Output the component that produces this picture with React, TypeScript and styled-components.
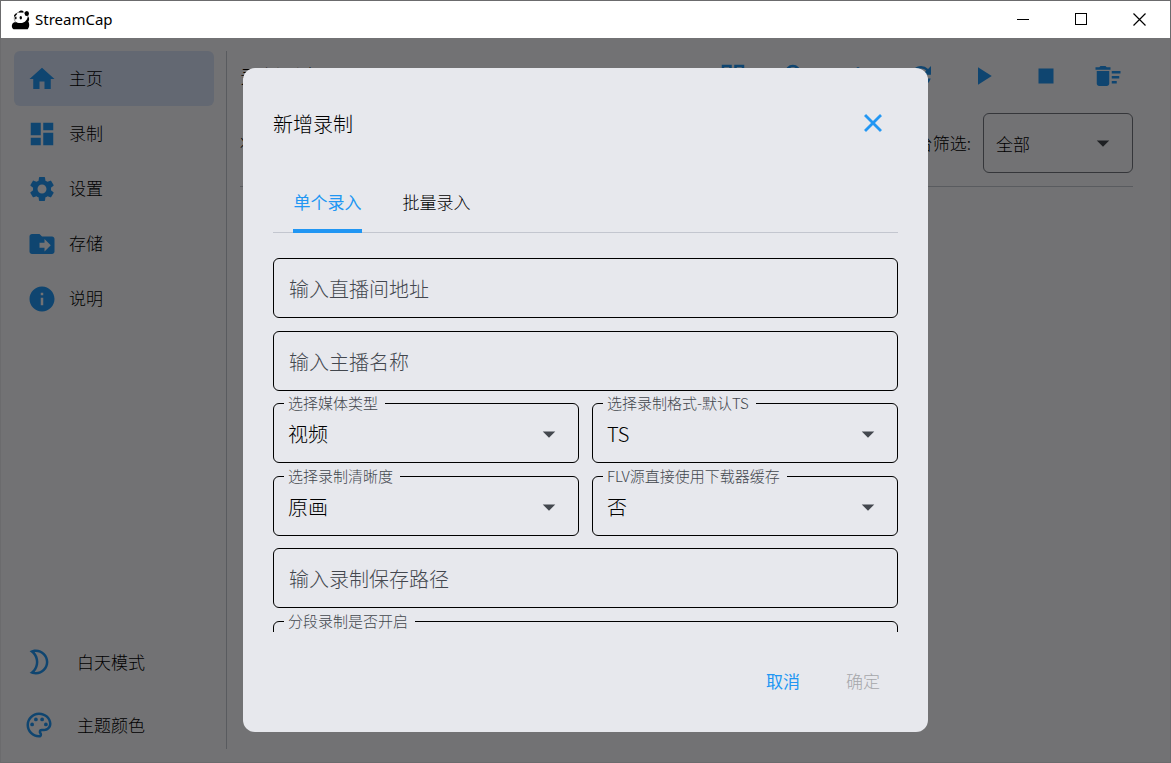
import React from "react";
import styled, { createGlobalStyle } from "styled-components";
import {
  MdAdd,
  MdArrowDropDown,
  MdClose,
  MdDashboard,
  MdDeleteSweep,
  MdDriveFileMove,
  MdHome,
  MdInfo,
  MdOutlineGridView,
  MdOutlineModeNight,
  MdOutlinePalette,
  MdPlayArrow,
  MdRefresh,
  MdSearch,
  MdSettings,
  MdStop,
} from "react-icons/md";

const color = {
  primary: "#2196f3",
  surface: "#f8f8fc",
  dialog: "#e7e8ed",
  selected: "#d7e3f8",
  text: "#000000",
  muted: "#43474e",
  disabled: "#a5a6aa",
  line: "#c3c6cf",
};

const GlobalStyle = createGlobalStyle`
  *, *::before, *::after { box-sizing: border-box; }
  html, body, #root { height: 100%; margin: 0; }
  body, button, input, select {
    font-family: "Noto Sans CJK SC", "Noto Sans", sans-serif;
    font-size: 17px;
    font-weight: 300;
    color: ${color.text};
  }
  button {
    padding: 0;
    border: 0;
    background: none;
    cursor: pointer;
  }
  svg { display: block; flex: none; }
`;

const Window = styled.div`
  display: flex;
  flex-direction: column;
  height: 100%;
  min-height: 480px;
  border: 1px solid #6b6b6d;
  overflow: hidden;
`;

const TitleBar = styled.header`
  display: flex;
  align-items: center;
  flex: none;
  height: 37px;
  padding: 0 2px 0 10px;
  background: #ffffff;
`;

const AppName = styled.span`
  flex: 1;
  margin-left: 5px;
  padding-bottom: 2px;
  font-family: "Noto Sans", sans-serif;
  font-size: 15px;
  font-weight: 400;
`;

const CaptionButton = styled.button`
  display: flex;
  align-items: center;
  justify-content: center;
  width: 58px;
  height: 100%;
`;

const Client = styled.div`
  position: relative;
  display: flex;
  flex: 1;
  min-height: 0;
  background: ${color.surface};
`;

const Sidebar = styled.aside`
  display: flex;
  flex-direction: column;
  justify-content: space-between;
  flex: none;
  width: 226px;
  margin: 13px 0;
  padding: 0 12px 0 13px;
  border-right: 1px solid ${color.line};
`;

const NavList = styled.nav`
  display: flex;
  flex-direction: column;
`;

const NavItem = styled.a<{ $active?: boolean }>`
  display: flex;
  align-items: center;
  gap: 12px;
  height: 55px;
  padding-left: 13px;
  border-radius: 6px;
  background: ${(p) => (p.$active ? color.selected : "transparent")};
  color: ${color.text};
  text-decoration: none;

  svg { color: ${color.primary}; }
`;

const ItemLabel = styled.span`
  padding-bottom: 2px;
`;

const Preferences = styled.div`
  display: flex;
  flex-direction: column;
  gap: 15px;
`;

const PreferenceButton = styled.button`
  display: flex;
  align-items: center;
  gap: 23px;
  height: 48px;
  padding-left: 10px;
  text-align: left;

  svg { color: ${color.primary}; }
`;

const Main = styled.main`
  flex: 1;
  min-width: 0;
  padding: 13px 37px 0 13px;
`;

const Toolbar = styled.div`
  display: flex;
  align-items: center;
  justify-content: space-between;
  height: 50px;
`;

const PageTitle = styled.h1`
  margin: 0;
  font-size: 20px;
  font-weight: 300;
`;

const ToolGroup = styled.div`
  display: flex;
  justify-content: space-between;
  width: 425px;
`;

const IconButton = styled.button`
  display: flex;
  align-items: center;
  justify-content: center;
  width: 50px;
  height: 50px;
  color: ${color.primary};
`;

const FilterRow = styled.div`
  display: flex;
  align-items: center;
  justify-content: space-between;
  padding: 12px 0 13px;
  border-bottom: 1px solid ${color.line};
`;

const FilterLabel = styled.label`
  padding-bottom: 2px;
`;

const PlatformFilter = styled.div`
  display: flex;
  align-items: center;
  gap: 12px;
`;

const SelectBox = styled.div`
  position: relative;
  width: 150px;
  height: 60px;
  border: 1px solid #73777f;
  border-radius: 6px;
`;

const Select = styled.select<{ $size: number; $inset: number }>`
  width: 100%;
  height: 100%;
  padding: 0 48px 0 ${(p) => p.$inset}px;
  border: 0;
  outline: 0;
  appearance: none;
  background: transparent;
  font-size: ${(p) => p.$size}px;
`;

const Caret = styled(MdArrowDropDown)`
  position: absolute;
  top: 50%;
  right: 14px;
  margin-top: -15px;
  color: ${color.muted};
  pointer-events: none;
`;

const Scrim = styled.div`
  position: absolute;
  inset: 0;
  display: flex;
  align-items: stretch;
  justify-content: center;
  padding: 30px;
  background: rgba(0, 0, 0, 0.54);
`;

const Dialog = styled.section`
  display: flex;
  flex-direction: column;
  width: 100%;
  max-width: 685px;
  padding: 30px 30px 25px;
  border-radius: 12px;
  background: ${color.dialog};
`;

const DialogHeader = styled.header`
  display: flex;
  align-items: center;
  justify-content: space-between;
  flex: none;
  height: 50px;
`;

const CloseButton = styled(IconButton)`
  path:last-child {
    stroke: ${color.primary};
    stroke-width: 0.3px;
  }
`;

const DialogTitle = styled.h2`
  margin: 0;
  font-size: 20px;
  font-weight: 300;
`;

const Tabs = styled.div`
  display: flex;
  flex: none;
  height: 60px;
  margin: 25px 0;
  border-bottom: 1px solid ${color.line};
`;

const Tab = styled.button<{ $active?: boolean }>`
  min-width: 69px;
  height: 60px;
  margin: 0 20px;
  border-bottom: 4px solid ${(p) => (p.$active ? color.primary : "transparent")};
  border-radius: 3px 3px 0 0;
  color: ${(p) => (p.$active ? color.primary : color.text)};
  font-weight: ${(p) => (p.$active ? 400 : 300)};
`;

const Form = styled.form`
  flex: 1;
  min-height: 0;
  margin-top: -8px;
  padding-top: 8px;
  overflow-y: auto;
  scrollbar-width: none;
`;

const FieldGroup = styled.div`
  display: grid;
  grid-template-columns: 1fr 1fr;
  gap: 13px;
  margin-bottom: 12px;
`;

const TextInput = styled.input`
  grid-column: 1 / -1;
  width: 100%;
  height: 60px;
  padding: 0 15px;
  border: 1px solid ${color.text};
  border-radius: 6px;
  outline: 0;
  background: transparent;
  font-size: 20px;

  &::placeholder { color: ${color.muted}; opacity: 1; }
`;

const Outline = styled.fieldset<{ $wide?: boolean }>`
  position: relative;
  grid-column: ${(p) => (p.$wide ? "1 / -1" : "auto")};
  min-width: 0;
  height: 68px;
  margin: -8px 0 0;
  padding: 0;
  border: 1px solid ${color.text};
  border-radius: 6px;
`;

const Legend = styled.legend`
  margin-left: 10px;
  padding: 0 7px 0 4px;
  color: ${color.muted};
  font-size: 15px;
  line-height: 16px;
`;

const FieldSelect = styled(Select)`
  height: 44px;
`;

const FieldCaret = styled(Caret)`
  top: 23px;
`;

const Actions = styled.footer`
  display: flex;
  justify-content: flex-end;
  gap: 10px;
  flex: none;
  margin-top: 25px;
`;

const ActionButton = styled.button`
  width: 70px;
  height: 50px;
  padding-bottom: 3px;
  color: ${color.primary};
  font-weight: 400;

  &:disabled {
    color: ${color.disabled};
    font-weight: 300;
    cursor: default;
  }
`;

function PandaLogo() {
  return (
    <svg width="19" height="20" viewBox="0 0 19 20" aria-hidden="true">
      <path d="M3.500 6.500C4.500 3.500 7 1.800 10 1.800S16.500 4 17.300 7.500 14 14 9.500 14 2.500 10.500 3.500 6.500Z" fill="#fff" stroke="#666" strokeWidth=".7" />
      <path d="M7.500 2.400C8.500.4 11 0 12.500 1.200L12 2.500Z" />
      <path d="M3 5.200 5 3.200 6.200 4 3.500 7Z" />
      <ellipse cx="15.800" cy="3.600" rx="2.200" ry="2.500" />
      <ellipse cx="9.800" cy="7.800" rx="1.200" ry="1.800" />
      <ellipse cx="4.800" cy="8" rx=".8" ry="1.400" />
      <path d="M17 6.500c1.500 1.500 1.500 3.500.3 5 1.200 1.800 1.500 5.500-.6 7.700H2.500C.8 18.500.4 16 1.300 14c.8-1.800 3-2 5-1.300 4.500.9 8.700.6 10.700-6.200Z" />
    </svg>
  );
}

interface SelectFieldProps {
  id: string;
  label: string;
  value: string;
  wide?: boolean;
}

function SelectField({ id, label, value, wide }: SelectFieldProps) {
  return (
    <Outline $wide={wide}>
      <Legend>
        <label htmlFor={id}>{label}</label>
      </Legend>
      <FieldSelect id={id} $size={20} $inset={14} defaultValue={value}>
        <option>{value}</option>
      </FieldSelect>
      <FieldCaret size={30} />
    </Outline>
  );
}

const navItems = [
  { label: "主页", icon: MdHome },
  { label: "录制", icon: MdDashboard },
  { label: "设置", icon: MdSettings },
  { label: "存储", icon: MdDriveFileMove },
  { label: "说明", icon: MdInfo },
];

const tools = [
  { label: "网格视图", icon: MdOutlineGridView },
  { label: "搜索", icon: MdSearch },
  { label: "新增", icon: MdAdd },
  { label: "刷新", icon: MdRefresh },
  { label: "开始", icon: MdPlayArrow },
  { label: "停止", icon: MdStop },
  { label: "清空", icon: MdDeleteSweep },
];

function RecordDialog() {
  return (
    <Dialog role="dialog" aria-modal="true" aria-labelledby="dialog-title">
      <DialogHeader>
        <DialogTitle id="dialog-title">新增录制</DialogTitle>
        <CloseButton aria-label="关闭">
          <MdClose size={30} />
        </CloseButton>
      </DialogHeader>
      <Tabs role="tablist">
        <Tab role="tab" aria-selected="true" $active>单个录入</Tab>
        <Tab role="tab" aria-selected="false">批量录入</Tab>
      </Tabs>
      <Form>
        <FieldGroup>
          <TextInput aria-label="输入直播间地址" placeholder="输入直播间地址" />
          <TextInput aria-label="输入主播名称" placeholder="输入主播名称" />
        </FieldGroup>
        <FieldGroup>
          <SelectField id="media" label="选择媒体类型" value="视频" />
          <SelectField id="format" label="选择录制格式-默认TS" value="TS" />
          <SelectField id="quality" label="选择录制清晰度" value="原画" />
          <SelectField id="flv" label="FLV源直接使用下载器缓存" value="否" />
        </FieldGroup>
        <FieldGroup>
          <TextInput aria-label="输入录制保存路径" placeholder="输入录制保存路径" />
          <SelectField id="segment" label="分段录制是否开启" value="否" wide />
        </FieldGroup>
      </Form>
      <Actions>
        <ActionButton>取消</ActionButton>
        <ActionButton disabled>确定</ActionButton>
      </Actions>
    </Dialog>
  );
}

export default function App() {
  return (
    <>
      <GlobalStyle />
      <Window>
        <TitleBar>
          <PandaLogo />
          <AppName>StreamCap</AppName>
          <CaptionButton aria-label="最小化">
            <svg width="13" height="13" viewBox="0 0 13 13" stroke="#000" shapeRendering="crispEdges">
              <path d="M0 6.500H12" />
            </svg>
          </CaptionButton>
          <CaptionButton aria-label="最大化">
            <svg width="13" height="13" viewBox="0 0 13 13" stroke="#000" fill="none" shapeRendering="crispEdges">
              <path d="M.5.500H11.500V11.500H.5Z" />
            </svg>
          </CaptionButton>
          <CaptionButton aria-label="关闭窗口">
            <svg width="13" height="13" viewBox="0 0 13 13" stroke="#000" strokeWidth="1.200">
              <path d="M.5.500 12.500 12.500M12.500.500.5 12.500" />
            </svg>
          </CaptionButton>
        </TitleBar>
        <Client>
          <Sidebar>
            <NavList>
              {navItems.map(({ label, icon: Icon }, i) => (
                <NavItem key={label} href="#" $active={i === 0}>
                  <Icon size={30} />
                  <ItemLabel>{label}</ItemLabel>
                </NavItem>
              ))}
            </NavList>
            <Preferences>
              <PreferenceButton>
                <MdOutlineModeNight size={30} />
                <ItemLabel>白天模式</ItemLabel>
              </PreferenceButton>
              <PreferenceButton>
                <MdOutlinePalette size={30} />
                <ItemLabel>主题颜色</ItemLabel>
              </PreferenceButton>
            </Preferences>
          </Sidebar>
          <Main>
            <Toolbar>
              <PageTitle>录制列表</PageTitle>
              <ToolGroup>
                {tools.map(({ label, icon: Icon }) => (
                  <IconButton key={label} aria-label={label}>
                    <Icon size={30} />
                  </IconButton>
                ))}
              </ToolGroup>
            </Toolbar>
            <FilterRow>
              <ItemLabel>状态筛选:</ItemLabel>
              <PlatformFilter>
                <FilterLabel htmlFor="platform">平台筛选:</FilterLabel>
                <SelectBox>
                  <Select id="platform" $size={17} $inset={12} defaultValue="全部">
                    <option>全部</option>
                  </Select>
                  <Caret size={30} />
                </SelectBox>
              </PlatformFilter>
            </FilterRow>
          </Main>
          <Scrim>
            <RecordDialog />
          </Scrim>
        </Client>
      </Window>
    </>
  );
}
